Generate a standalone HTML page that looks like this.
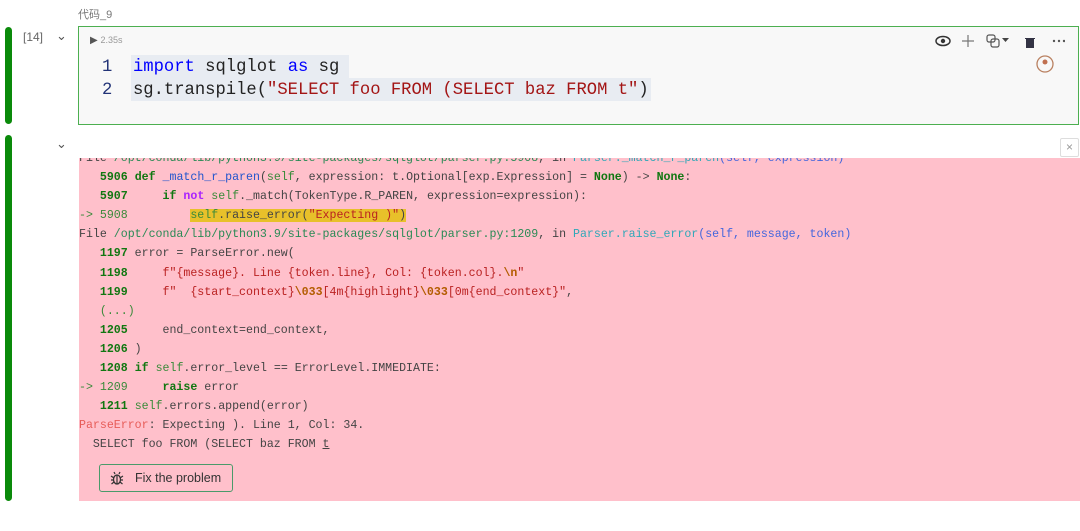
<!DOCTYPE html><html><head><style>
body{margin:0;width:1080px;height:531px;background:#fff;position:relative;overflow:hidden;font-family:"Liberation Sans",sans-serif}
.a{position:absolute}
.m{font-family:"Liberation Mono",monospace;font-size:11.6px;white-space:pre;color:#444;line-height:19.1px}
.n{color:#117711;font-weight:bold}
.k{color:#117711;font-weight:bold}
.p{color:#aa22ff;font-weight:bold}
.f{color:#2255cc}
.s{color:#3a8a3a}
.r{color:#ba2121}
.o{color:#b35c00;font-weight:bold}
.g{color:#2a8a55}
.c{color:#30a8b8}
.b{color:#4466dd}
.code{font-family:"Liberation Mono",monospace;font-size:17.2px;white-space:pre;line-height:23px;color:#222}
</style></head><body>
<div class="a" style="left:78px;top:6px;font-size:11px;color:#777;font-family:'Liberation Sans','Noto Sans CJK SC',sans-serif">代码_9</div>
<div class="a" style="left:5px;top:27px;width:7px;height:97px;background:#0a8a0a;border-radius:4px"></div>
<div class="a" style="left:5px;top:135px;width:7px;height:366px;background:#0a8a0a;border-radius:4px"></div>
<div class="a" style="left:23px;top:30px;font-size:12px;color:#666">[14]</div>
<div class="a" style="left:56px;top:28px;font-size:13px;color:#555">&#8964;</div>
<div class="a" style="left:56px;top:136px;font-size:13px;color:#555">&#8964;</div>
<div class="a" style="left:78px;top:26px;width:999px;height:97px;background:#f8f8f8;border:1px solid #4caf50"></div>
<div class="a" style="left:90px;top:35px;font-size:10px;color:#555">&#9654; <span style="color:#999;font-size:9px">2.35s</span></div>
<div class="a" style="left:131px;top:55px;width:218px;height:23px;background:#e8ecf2"></div>
<div class="a" style="left:131px;top:78px;width:520px;height:23px;background:#e8ecf2"></div>
<div class="a code" style="left:102px;top:56px"><span style="color:#237">1</span>  <span style="color:#00f">import</span> sqlglot <span style="color:#00f">as</span> sg
<span style="color:#237">2</span>  sg.transpile(<span style="color:#a31515">"SELECT foo FROM (SELECT baz FROM t"</span>)</div>
<svg class="a" style="left:935px;top:34px" width="130" height="40">
<ellipse cx="8" cy="7" rx="7" ry="4.5" fill="none" stroke="#333" stroke-width="1.5"/><circle cx="8" cy="7" r="2.2" fill="#333"/>
<path d="M33 1v12M27 7h12" stroke="#777" stroke-width="1.2"/>
<rect x="52" y="1" width="8" height="7" rx="2" fill="none" stroke="#555" stroke-width="1.2"/><rect x="56" y="5" width="8" height="8" rx="2" fill="none" stroke="#555" stroke-width="1.2"/>
<path d="M67 4h7l-3.5 4z" fill="#444"/>
<path d="M91 2h8M90 4h10v1h-10z M91 5h8v9h-8z" fill="#334"/>
<circle cx="119" cy="7" r="1.2" fill="#555"/><circle cx="124" cy="7" r="1.2" fill="#555"/><circle cx="129" cy="7" r="1.2" fill="#555"/>
<circle cx="110" cy="30" r="8" fill="none" stroke="#b98060" stroke-width="1.3"/><circle cx="110" cy="28" r="2.5" fill="#c07050"/>
</svg>
<div class="a" style="left:1060px;top:138px;width:17px;height:17px;border:1px solid #ddd;border-radius:2px;background:#fff;color:#999;font-size:12px;text-align:center;line-height:17px">×</div>
<div class="a" style="left:79px;top:158px;width:1001px;height:343px;background:#ffc0cb;overflow:hidden">
<div class="a m" style="left:0;top:-9px"><span>File </span><span class="g">/opt/conda/lib/python3.9/site-packages/sqlglot/parser.py:5908</span>, in <span class="c">Parser._match_r_paren</span><span class="b">(self, expression)</span>
   <span class="n">5906</span> <span class="k">def</span> <span class="f">_match_r_paren</span>(<span class="s">self</span>, expression: t.Optional[exp.Expression] = <span class="k">None</span>) -&gt; <span class="k">None</span>:
   <span class="n">5907</span>     <span class="k">if</span> <span class="p">not</span> <span class="s">self</span>._match(TokenType.R_PAREN, expression=expression):
<span class="s">-&gt; 5908</span>         <span style="background:#e8c02a"><span class="s">self</span>.raise_error(<span class="r">"Expecting )"</span>)</span>
File <span class="g">/opt/conda/lib/python3.9/site-packages/sqlglot/parser.py:1209</span>, in <span class="c">Parser.raise_error</span><span class="b">(self, message, token)</span>
   <span class="n">1197</span> error = ParseError.new(
   <span class="n">1198</span>     <span class="r">f"</span><span class="r">{message}. Line {token.line}, Col: {token.col}.</span><span class="o">\n</span><span class="r">"</span>
   <span class="n">1199</span>     <span class="r">f"  {start_context}</span><span class="o">\033</span><span class="r">[4m{highlight}</span><span class="o">\033</span><span class="r">[0m{end_context}"</span>,
   <span class="s">(...)</span>
   <span class="n">1205</span>     end_context=end_context,
   <span class="n">1206</span> )
   <span class="n">1208</span> <span class="k">if</span> <span class="s">self</span>.error_level == ErrorLevel.IMMEDIATE:
<span class="s">-&gt; 1209</span>     <span class="k">raise</span> error
   <span class="n">1211</span> <span class="s">self</span>.errors.append(error)
<span style="color:#e75c58">ParseError</span>: Expecting ). Line 1, Col: 34.
  SELECT foo FROM (SELECT baz FROM <u>t</u></div>
<div class="a" style="left:20px;top:306px;width:132px;height:26px;border:1px solid #4a9a6a;border-radius:3px;font-size:12.5px;color:#333;line-height:26px">
<svg style="position:absolute;left:10px;top:6px" width="14" height="14" viewBox="0 0 14 14"><ellipse cx="7" cy="8.5" rx="3.5" ry="4.5" fill="none" stroke="#333" stroke-width="1.3"/><path d="M7 4v9M1 5l3 2M13 5l-3 2M1 9h2.5M13 9h-2.5M1.5 13l2.5-2M12.5 13l-2.5-2M5 3l-1-2M9 3l1-2" stroke="#333" stroke-width="1.2" fill="none"/></svg>
<span style="position:absolute;left:35px">Fix the problem</span></div>
</div>
</body></html>
